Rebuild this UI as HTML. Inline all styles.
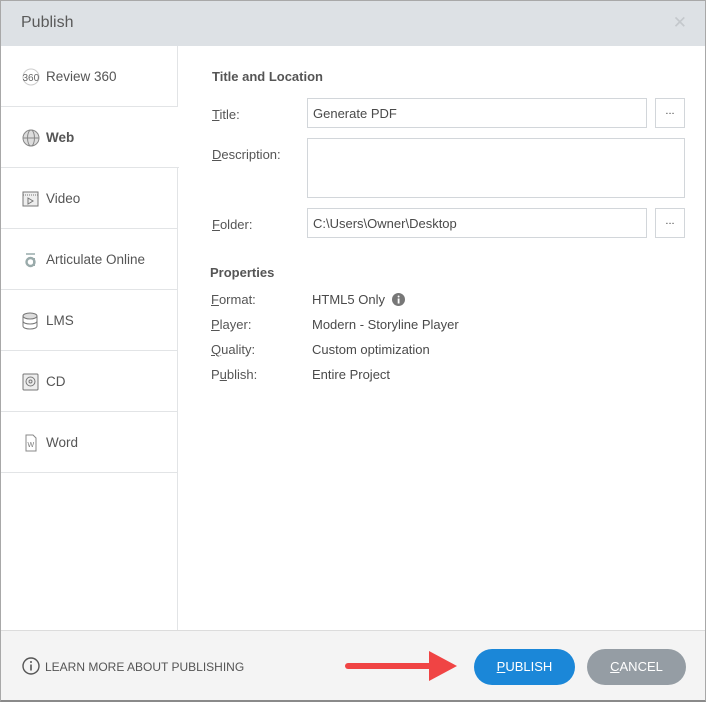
<!DOCTYPE html>
<html><head><style>
*{box-sizing:border-box;margin:0;padding:0}
body{width:706px;height:702px;font-family:"Liberation Sans",sans-serif;color:#4a4a4a;font-size:13px;background:#fff;position:relative;overflow:hidden}
.frame{position:absolute;left:0;top:0;width:706px;height:702px;border:1px solid #a8a8a8;border-bottom:2px solid #8a8a8a}
.hdr{position:absolute;left:1px;top:1px;width:704px;height:45px;background:#dde1e5;font-size:16px;color:#5a5a5a;padding:13px 0 0 20px}
.x{position:absolute;right:18px;top:12px;color:#c4c8cc;font-size:17px}
.side{position:absolute;left:1px;top:46px;width:177px;height:584px;border-right:1px solid #e2e4e6}
.item{position:absolute;left:0;width:177px;height:61px;border-bottom:1px solid #e2e4e6;border-right:1px solid #e2e4e6;background:#fff;font-size:13.5px;color:#555}
.item .t{position:absolute;left:45px;top:23px}
.item svg{position:absolute;left:21px;top:22px}
.sel{width:178px;border-right:none}
.lbl{position:absolute;left:212px;font-size:13px;color:#555}
.u{text-decoration:underline}
.box{position:absolute;border:1px solid #d2d6da;background:#fff}
.val{position:absolute;left:312px;font-size:13px;color:#4a4a4a}
.foot{position:absolute;left:1px;top:630px;width:704px;height:70px;background:#f4f4f4;border-top:1px solid #dcdcdc}
.btn{position:absolute;top:18px;height:36px;border-radius:18px;color:#fff;font-size:13px;text-align:center;line-height:36px}
</style></head><body>
<div class="frame"></div>
<div class="hdr">Publish<span class="x">✕</span></div>
<div class="side">
 <div class="item" style="top:0"><svg width="18" height="18"><circle cx="9" cy="9" r="8" fill="none" stroke="#ccc"/><text x="0.5" y="13" font-size="10" fill="#666" font-family="Liberation Sans">360</text></svg><span class="t">Review 360</span></div>
 <div class="item sel" style="top:61px"><svg width="18" height="18"><circle cx="9" cy="9" r="8" fill="#ddd" stroke="#888"/><ellipse cx="9" cy="9" rx="3.5" ry="8" fill="none" stroke="#888"/><line x1="1" y1="9" x2="17" y2="9" stroke="#888"/></svg><span class="t" style="font-weight:bold">Web</span></div>
 <div class="item" style="top:122px"><svg width="18" height="18"><rect x="1" y="2" width="15" height="14" fill="#eee" stroke="#777"/><line x1="1" y1="5" x2="16" y2="5" stroke="#777" stroke-dasharray="1 1"/><path d="M6 8 L11 11 L6 14Z" fill="none" stroke="#777"/></svg><span class="t">Video</span></div>
 <div class="item" style="top:183px"><svg width="18" height="18"><line x1="4" y1="3" x2="13" y2="3" stroke="#9aa" stroke-width="1.5"/><circle cx="8.5" cy="11" r="4" fill="none" stroke="#9aa" stroke-width="2.4"/><line x1="12" y1="7" x2="12" y2="15" stroke="#9aa" stroke-width="2"/></svg><span class="t">Articulate Online</span></div>
 <div class="item" style="top:244px"><svg width="18" height="18"><ellipse cx="8" cy="4" rx="7" ry="3" fill="#ddd" stroke="#777"/><path d="M1 4v10c0 4 14 4 14 0V4M1 9c0 4 14 4 14 0" fill="none" stroke="#777"/></svg><span class="t">LMS</span></div>
 <div class="item" style="top:305px"><svg width="18" height="18"><rect x="1" y="1" width="15" height="16" rx="1" fill="#eee" stroke="#777"/><circle cx="8.5" cy="8.5" r="4.5" fill="none" stroke="#777"/><circle cx="8.5" cy="8.5" r="1.5" fill="none" stroke="#777"/></svg><span class="t">CD</span></div>
 <div class="item" style="top:366px"><svg width="18" height="18"><path d="M4 1h7l3 3v13H4z" fill="#fff" stroke="#888"/><text x="5.5" y="13" font-size="7" fill="#777">W</text></svg><span class="t">Word</span></div>
</div>
<div class="lbl" style="top:69px;font-weight:bold;font-size:13px">Title and Location</div>
<div class="lbl" style="top:107px"><span class="u">T</span>itle:</div>
<div class="box" style="left:307px;top:98px;width:340px;height:30px"></div>
<div class="val" style="top:106px;left:313px">Generate PDF</div>
<div class="box" style="left:655px;top:98px;width:30px;height:30px;text-align:center;line-height:24px;font-size:11px">...</div>
<div class="lbl" style="top:147px"><span class="u">D</span>escription:</div>
<div class="box" style="left:307px;top:138px;width:378px;height:60px"></div>
<div class="lbl" style="top:217px"><span class="u">F</span>older:</div>
<div class="box" style="left:307px;top:208px;width:340px;height:30px"></div>
<div class="val" style="top:216px;left:313px">C:\Users\Owner\Desktop</div>
<div class="box" style="left:655px;top:208px;width:30px;height:30px;text-align:center;line-height:24px;font-size:11px">...</div>
<div class="lbl" style="left:210px;top:265px;font-weight:bold">Properties</div>
<div class="lbl" style="left:211px;top:292px"><span class="u">F</span>ormat:</div>
<div class="lbl" style="left:211px;top:317px"><span class="u">P</span>layer:</div>
<div class="lbl" style="left:211px;top:342px"><span class="u">Q</span>uality:</div>
<div class="lbl" style="left:211px;top:367px">P<span class="u">u</span>blish:</div>
<div class="val" style="top:292px">HTML5 Only <svg width="13" height="13" style="vertical-align:-2px;margin-left:3px"><circle cx="6.5" cy="6.5" r="6.5" fill="#777"/><rect x="5.7" y="5.5" width="1.8" height="5" fill="#fff"/><circle cx="6.6" cy="3.5" r="1" fill="#fff"/></svg></div>
<div class="val" style="top:317px">Modern - Storyline Player</div>
<div class="val" style="top:342px">Custom optimization</div>
<div class="val" style="top:367px">Entire Project</div>
<div class="foot">
 <svg width="18" height="18" style="position:absolute;left:21px;top:26px"><circle cx="9" cy="9" r="8" fill="none" stroke="#555" stroke-width="1.4"/><rect x="8.2" y="7.5" width="1.6" height="6" fill="#555"/><circle cx="9" cy="5" r="1" fill="#555"/></svg>
 <span style="position:absolute;left:44px;top:29px;font-size:12px;color:#555">LEARN MORE ABOUT PUBLISHING</span>
 <svg width="120" height="36" style="position:absolute;left:340px;top:17px"><line x1="7" y1="18" x2="90" y2="18" stroke="#f04444" stroke-width="6" stroke-linecap="round"/><path d="M88 3 L116 18 L88 33Z" fill="#f04444"/></svg>
 <div class="btn" style="left:473px;width:101px;background:#1b87d8"><span class="u">P</span>UBLISH</div>
 <div class="btn" style="left:586px;width:99px;background:#959da4"><span class="u">C</span>ANCEL</div>
</div>
</body></html>
